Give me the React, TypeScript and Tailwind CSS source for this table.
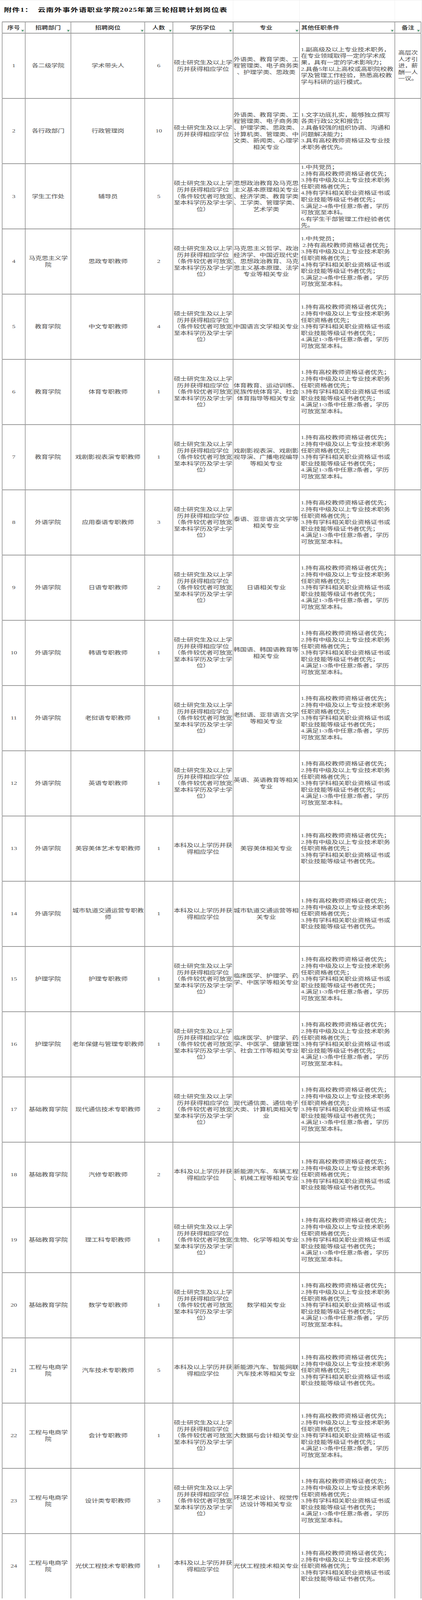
import React from "react"

type Row = {
  no: number
  dept: string[]
  post: string[]
  num: number
  edu: string[]
  major: string[]
  req: string[]
  note?: string[]
}

const EDU_M = ["硕士研究生及以上学", "历并获得相应学位", "（条件较优者可放宽", "至本科学历及学士学", "位）"]
const EDU_M2 = ["硕士研究生及以上学", "历并获得相应学位"]
const EDU_B = ["本科及以上学历并获", "得相应学位"]

const REQ4 = [
  "1.持有高校教师资格证者优先；",
  "2.持有中级及以上专业技术职务",
  "任职资格者优先；",
  "3.持有学科相关职业资格证书或",
  "职业技能等级证书者优先；",
  "4.满足1-3条中任意2条者，学历",
  "可放宽至本科。",
]
const REQ3 = [
  "1.持有高校教师资格证者优先；",
  "2.持有中级及以上专业技术职务",
  "任职资格者优先；",
  "3.持有学科相关职业资格证书或",
  "职业技能等级证书者优先。",
]

const rows: Row[] = [
  {
    no: 1, dept: ["各二级学院"], post: ["学术带头人"], num: 6, edu: EDU_M2,
    major: ["外语类、教育学类、工", "程管理类、电子商务类", "、护理学类、思政类"],
    req: [
      "1.副高级及以上专业技术职务，",
      "在专业领域取得一定的学术成",
      "果，具有一定的学术影响力；",
      "2.具备5年以上高校或高职院校教",
      "学及管理工作经验，熟悉高校教",
      "学与科研的运行模式。",
    ],
    note: ["高层次", "人才引", "进，薪", "酬一人", "一议。"],
  },
  {
    no: 2, dept: ["各行政部门"], post: ["行政管理岗"], num: 10, edu: EDU_M2,
    major: ["外语类、教育学类、工", "程管理类、电子商务类", "、护理学类、思政类、", "计算机类、管理类、中", "文类、新闻类、心理学", "相关专业"],
    req: [
      "1.文字功底扎实，能够独立撰写",
      "各类行政公文和报告；",
      "2.具备较强的组织协调、沟通和",
      "问题解决能力；",
      "3.具有高校教师资格证及专业技",
      "术职务者优先。",
    ],
  },
  {
    no: 3, dept: ["学生工作处"], post: ["辅导员"], num: 5, edu: EDU_M,
    major: ["思想政治教育及马克思", "主义基本原理相关专业", "、经济学类、教育学类", "、工学类、管理学类、", "艺术学类"],
    req: [
      "1.中共党员；",
      "2.持有高校教师资格证者优先；",
      "3.持有中级及以上专业技术职务",
      "任职资格者优先；",
      "4.持有学科相关职业资格证书或",
      "职业技能等级证书者优先；",
      "5.满足2-4条中任意2条者，学历",
      "可放宽至本科。",
      "6.有学生干部管理工作经验者优",
      "先。",
    ],
  },
  {
    no: 4, dept: ["马克思主义学", "院"], post: ["思政专职教师"], num: 2, edu: EDU_M,
    major: ["马克思主义哲学、政治", "经济学、中国近现代史", "、思想政治教育、马克", "思主义基本原理、法学", "专业等相关专业"],
    req: [
      "1.中共党员；",
      " 2.持有高校教师资格证者优先；",
      "3.持有中级及以上专业技术职务",
      "任职资格者优先；",
      "4.持有学科相关职业资格证书或",
      "职业技能等级证书者优先；",
      "5.满足2-4条中任意2条者，学历",
      "可放宽至本科。",
    ],
  },
  { no: 5, dept: ["教育学院"], post: ["中文专职教师"], num: 4, edu: EDU_M, major: ["中国语言文学相关专业"], req: REQ4 },
  { no: 6, dept: ["教育学院"], post: ["体育专职教师"], num: 1, edu: EDU_M, major: ["体育教育、运动训练、", "民族传统体育学、社会", "体育指导等相关专业"], req: REQ4 },
  { no: 7, dept: ["教育学院"], post: ["戏剧影视表演专职教师"], num: 1, edu: EDU_M, major: ["戏剧影视表演、戏剧影", "视导演、广播电视编导", "等相关专业"], req: REQ4 },
  { no: 8, dept: ["外语学院"], post: ["应用泰语专职教师"], num: 3, edu: EDU_M, major: ["泰语、亚非语言文学等", "相关专业"], req: REQ4 },
  { no: 9, dept: ["外语学院"], post: ["日语专职教师"], num: 2, edu: EDU_M, major: ["日语相关专业"], req: REQ4 },
  { no: 10, dept: ["外语学院"], post: ["韩语专职教师"], num: 1, edu: EDU_M, major: ["韩国语、韩国语教育等", "相关专业"], req: REQ4 },
  { no: 11, dept: ["外语学院"], post: ["老挝语专职教师"], num: 1, edu: EDU_M, major: ["老挝语、亚非语言文学", "等相关专业"], req: REQ4 },
  { no: 12, dept: ["外语学院"], post: ["英语专职教师"], num: 1, edu: EDU_M, major: ["英语、英语教育等相关", "专业"], req: REQ4 },
  { no: 13, dept: ["外语学院"], post: ["美容美体艺术专职教师"], num: 1, edu: EDU_B, major: ["美容美体相关专业"], req: REQ3 },
  { no: 14, dept: ["外语学院"], post: ["城市轨道交通运营专职教", "师"], num: 1, edu: EDU_B, major: ["城市轨道交通运营等相", "关专业"], req: REQ3 },
  { no: 15, dept: ["护理学院"], post: ["护理专职教师"], num: 1, edu: EDU_M, major: ["临床医学、护理学、药", "学、中医学等相关专业"], req: REQ4 },
  { no: 16, dept: ["护理学院"], post: ["老年保健与管理专职教师"], num: 1, edu: EDU_M, major: ["临床医学、护理学、药", "学、中医学、健康管理", "、社会工作等相关专业"], req: REQ4 },
  { no: 17, dept: ["基础教育学院"], post: ["现代通信技术专职教师"], num: 2, edu: EDU_M, major: ["现代通信类、通信电子", "大类、计算机类相关专", "业"], req: REQ4 },
  { no: 18, dept: ["基础教育学院"], post: ["汽修专职教师"], num: 2, edu: EDU_B, major: ["新能源汽车、车辆工程", "、机械工程等相关专业"], req: REQ3 },
  { no: 19, dept: ["基础教育学院"], post: ["理工科专职教师"], num: 1, edu: EDU_M, major: ["生物、化学等相关专业"], req: REQ4 },
  { no: 20, dept: ["基础教育学院"], post: ["数学专职教师"], num: 1, edu: EDU_M, major: ["数学相关专业"], req: REQ4 },
  { no: 21, dept: ["工程与电商学", "院"], post: ["汽车技术专职教师"], num: 5, edu: EDU_B, major: ["新能源汽车、智能网联", "汽车技术等相关专业"], req: REQ3 },
  { no: 22, dept: ["工程与电商学", "院"], post: ["会计专职教师"], num: 1, edu: EDU_M, major: ["大数据与会计相关专业"], req: REQ4 },
  { no: 23, dept: ["工程与电商学", "院"], post: ["设计类专职教师"], num: 3, edu: EDU_M, major: ["环境艺术设计、视觉传", "达设计等相关专业"], req: REQ4 },
  { no: 24, dept: ["工程与电商学", "院"], post: ["光伏工程技术专职教师"], num: 1, edu: EDU_B, major: ["光伏工程技术相关专业"], req: REQ3 },
]

const GRID = "grid grid-cols-[59px_117px_189px_72px_154px_170px_244px_68px]"

// one table cell; the scanned sheet has wide glyphs, so text is stretched on x
function Cell({ lines, left, last }: { lines: string[]; left?: boolean; last?: boolean }) {
  return (
    <div
      className={`flex items-center ${left ? "justify-start pl-[3px]" : "justify-center"} border-l border-[#555] ${last ? "border-r" : ""} text-[13px] tracking-[-0.2px] text-[#4d4d4d]`}
    >
      <div className={`${left ? "origin-left text-left" : "text-center"} scale-x-[1.3]`}>
        {lines.map((l, i) => (
          <div key={i} className="h-[16.6px] leading-[16.6px] whitespace-pre">{l}</div>
        ))}
      </div>
    </div>
  )
}

// excel filter button in the header cells
function FilterMark() {
  return (
    <span className="absolute right-[2px] bottom-[2px] w-[8px] h-[7px] border border-[#d9d9d9] bg-[#f7f7f7] flex items-end justify-center">
      <svg width="6" height="4" viewBox="0 0 6 4">
        <path d="M0 0 L6 0 L3 4 Z" fill="#2e8b57" />
      </svg>
    </span>
  )
}

function HeadCell({ label, left, last }: { label: string; left?: boolean; last?: boolean }) {
  return (
    <div
      className={`relative flex items-center ${left ? "justify-start pl-[4px]" : "justify-center"} border-l border-[#555] ${last ? "border-r" : ""}`}
    >
      <span className={`${left ? "origin-left" : ""} scale-x-[1.25] text-[13px] leading-[16px] font-medium text-[#1f1f1f]`}>
        {label}
      </span>
      <FilterMark />
    </div>
  )
}

export default function App() {
  return (
    <div className="w-[1080px] bg-white font-['Liberation_Serif','Noto_Sans_CJK_SC',serif]">
      {/* title band */}
      <div className="relative h-[55px] border-t border-[#eeeeee]">
        <div className="absolute left-[596px] top-0 bottom-0 border-l border-[#f0f0f0]" />
        <div className="absolute left-[766px] top-0 bottom-0 border-l border-[#f0f0f0]" />
        <div className="absolute left-[1010px] top-0 bottom-0 border-l border-[#f0f0f0]" />
        <div className="absolute left-[1078px] top-0 bottom-0 border-l border-[#f0f0f0]" />
        <div className="pt-[15px] pl-[10px]">
          <div className="origin-left scale-x-[1.4] w-max text-[14px] leading-[20px] font-bold tracking-[1px] text-[#111] whitespace-pre">
            附件1：  云南外事外语职业学院2025年第三轮招聘计划岗位表
          </div>
        </div>
      </div>

      <div className="ml-[5px] w-[1073px]">
        {/* header */}
        <div className={`${GRID} h-[29px] border-t-2 border-[#9a9a9a]`}>
          <HeadCell label="序号" />
          <HeadCell label="招聘部门" />
          <HeadCell label="招聘岗位" />
          <HeadCell label="人数" />
          <HeadCell label="学历学位" />
          <HeadCell label="专业" />
          <HeadCell label="其他任职条件" left />
          <HeadCell label="备注" last />
        </div>

        {rows.map((r) => (
          <div key={r.no} className={`${GRID} h-[167px] border-t-2 border-[#9a9a9a]`}>
            <Cell lines={[String(r.no)]} />
            <Cell lines={r.dept} />
            <Cell lines={r.post} />
            <Cell lines={[String(r.num)]} />
            <Cell lines={r.edu} />
            <Cell lines={r.major} />
            <Cell lines={r.req} left />
            <Cell lines={r.note ?? []} last />
          </div>
        ))}
      </div>
    </div>
  )
}
